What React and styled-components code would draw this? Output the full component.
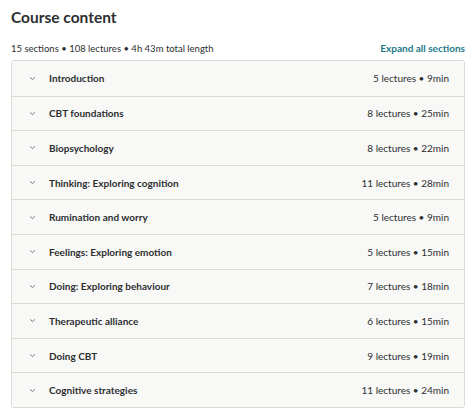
import React from "react";
import styled, { createGlobalStyle } from "styled-components";

const Global = createGlobalStyle`
  html, body { margin: 0; padding: 0; background: #ffffff; }
  body { font-family: "Lato", "Noto Sans", sans-serif; color: #2d2f31; }
`;

const Page = styled.div`
  padding: 5px 9px 0 11px;
  width: 454px;
`;

const Title = styled.h2`
  margin: 0;
  font-size: 15.5px;
  font-weight: 700;
  line-height: 24px;
  color: #2d2f31;
`;

const Meta = styled.div`
  display: flex;
  justify-content: space-between;
  align-items: baseline;
  margin-top: 13px;
  height: 16px;
  font-size: 10px;
`;

const Stats = styled.span`
  font-size: 9.5px;
  color: #2d2f31;
`;

const ExpandLink = styled.button`
  border: 0;
  background: none;
  padding: 0;
  font: inherit;
  font-weight: 700;
  color: #1b7a8a;
  cursor: pointer;
`;

const Panel = styled.div`
  margin-top: 2px;
  border: 1px solid #dcdad4;
  border-radius: 3px;
  overflow: hidden;
`;

const Row = styled.div`
  display: flex;
  align-items: center;
  height: 34.6px;
  padding: 0 15px 0 16px;
  background: #f8f8f6;
  border-top: ${(p) => (p.$first ? "none" : "1px solid #dcdad4")};
  box-sizing: border-box;
  font-size: 10px;
`;

const Chevron = styled.svg`
  width: 9px;
  height: 9px;
  margin-right: 12px;
  flex: none;
`;

const SectionName = styled.span`
  flex: 1;
  font-weight: 700;
  color: #2d2f31;
`;

const SectionInfo = styled.span`
  color: #2d2f31;
`;

const sections = [
  ["Introduction", 5, "9min"],
  ["CBT foundations", 8, "25min"],
  ["Biopsychology", 8, "22min"],
  ["Thinking: Exploring cognition", 11, "28min"],
  ["Rumination and worry", 5, "9min"],
  ["Feelings: Exploring emotion", 5, "15min"],
  ["Doing: Exploring behaviour", 7, "18min"],
  ["Therapeutic alliance", 6, "15min"],
  ["Doing CBT", 9, "19min"],
  ["Cognitive strategies", 11, "24min"],
];

export default function App() {
  return (
    <>
      <Global />
      <Page>
        <Title>Course content</Title>
        <Meta>
          <Stats>15 sections • 108 lectures • 4h 43m total length</Stats>
          <ExpandLink>Expand all sections</ExpandLink>
        </Meta>
        <Panel>
          {sections.map(([name, n, len], i) => (
            <Row key={name} $first={i === 0}>
              <Chevron viewBox="0 0 10 10">
                <path d="M2.5 3.8 L5 6.2 L7.5 3.8" fill="none" stroke="#6a6f73" strokeWidth="1.1" />
              </Chevron>
              <SectionName>{name}</SectionName>
              <SectionInfo>{n} lectures • {len}</SectionInfo>
            </Row>
          ))}
        </Panel>
      </Page>
    </>
  );
}
